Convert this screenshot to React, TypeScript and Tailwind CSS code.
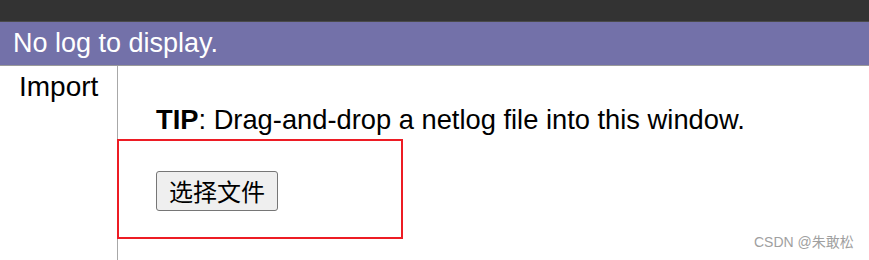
export default function App() {
  return (
    <div
      className="relative h-[260px] w-[869px] overflow-hidden bg-white text-black"
      style={{ fontFamily: '"Liberation Sans", Arial, "Noto Sans CJK SC", sans-serif' }}
    >
      {/* window top strip */}
      <div className="h-[22px] border-b border-[#4a4a4a] bg-[#333333]" />

      {/* status bar */}
      <div className="flex h-[44px] items-center border-b border-[#9a9a9a] bg-[#7371a9] pl-[13px] text-[27px] leading-none text-white">
        No log to display.
      </div>

      <div className="flex h-[194px]">
        {/* tab list */}
        <div className="w-[118px] shrink-0 border-r border-[#a8a8a8] pt-[6px]">
          <div className="pl-[19px] text-[28px] leading-[30px]">Import</div>
        </div>

        {/* import view */}
        <div className="flex flex-col">
          <p className="ml-[38px] mt-[39px] text-[27.3px] leading-[30px]">
            <b>TIP</b>: Drag-and-drop a netlog file into this window.
          </p>

          <div className="-ml-px mt-[4px] h-[100px] w-[286px] border-2 border-[#ed1c24] pl-[37px] pt-[30px]">
            <button
              type="button"
              className="flex h-[40px] w-[122px] items-center justify-center rounded-[3px] border border-[#767676] bg-[#efefef] text-[24px] leading-none"
              style={{ fontFamily: '"Noto Sans CJK SC", "Liberation Sans", sans-serif' }}
            >
              选择文件
            </button>
          </div>
        </div>
      </div>

      {/* watermark */}
      <div
        className="absolute left-[754px] top-[235px] text-[14px] leading-none text-[#a0a0a0]"
        style={{ fontFamily: '"Liberation Sans", "Noto Sans CJK SC", sans-serif' }}
      >
        CSDN @朱敢松
      </div>
    </div>
  )
}
